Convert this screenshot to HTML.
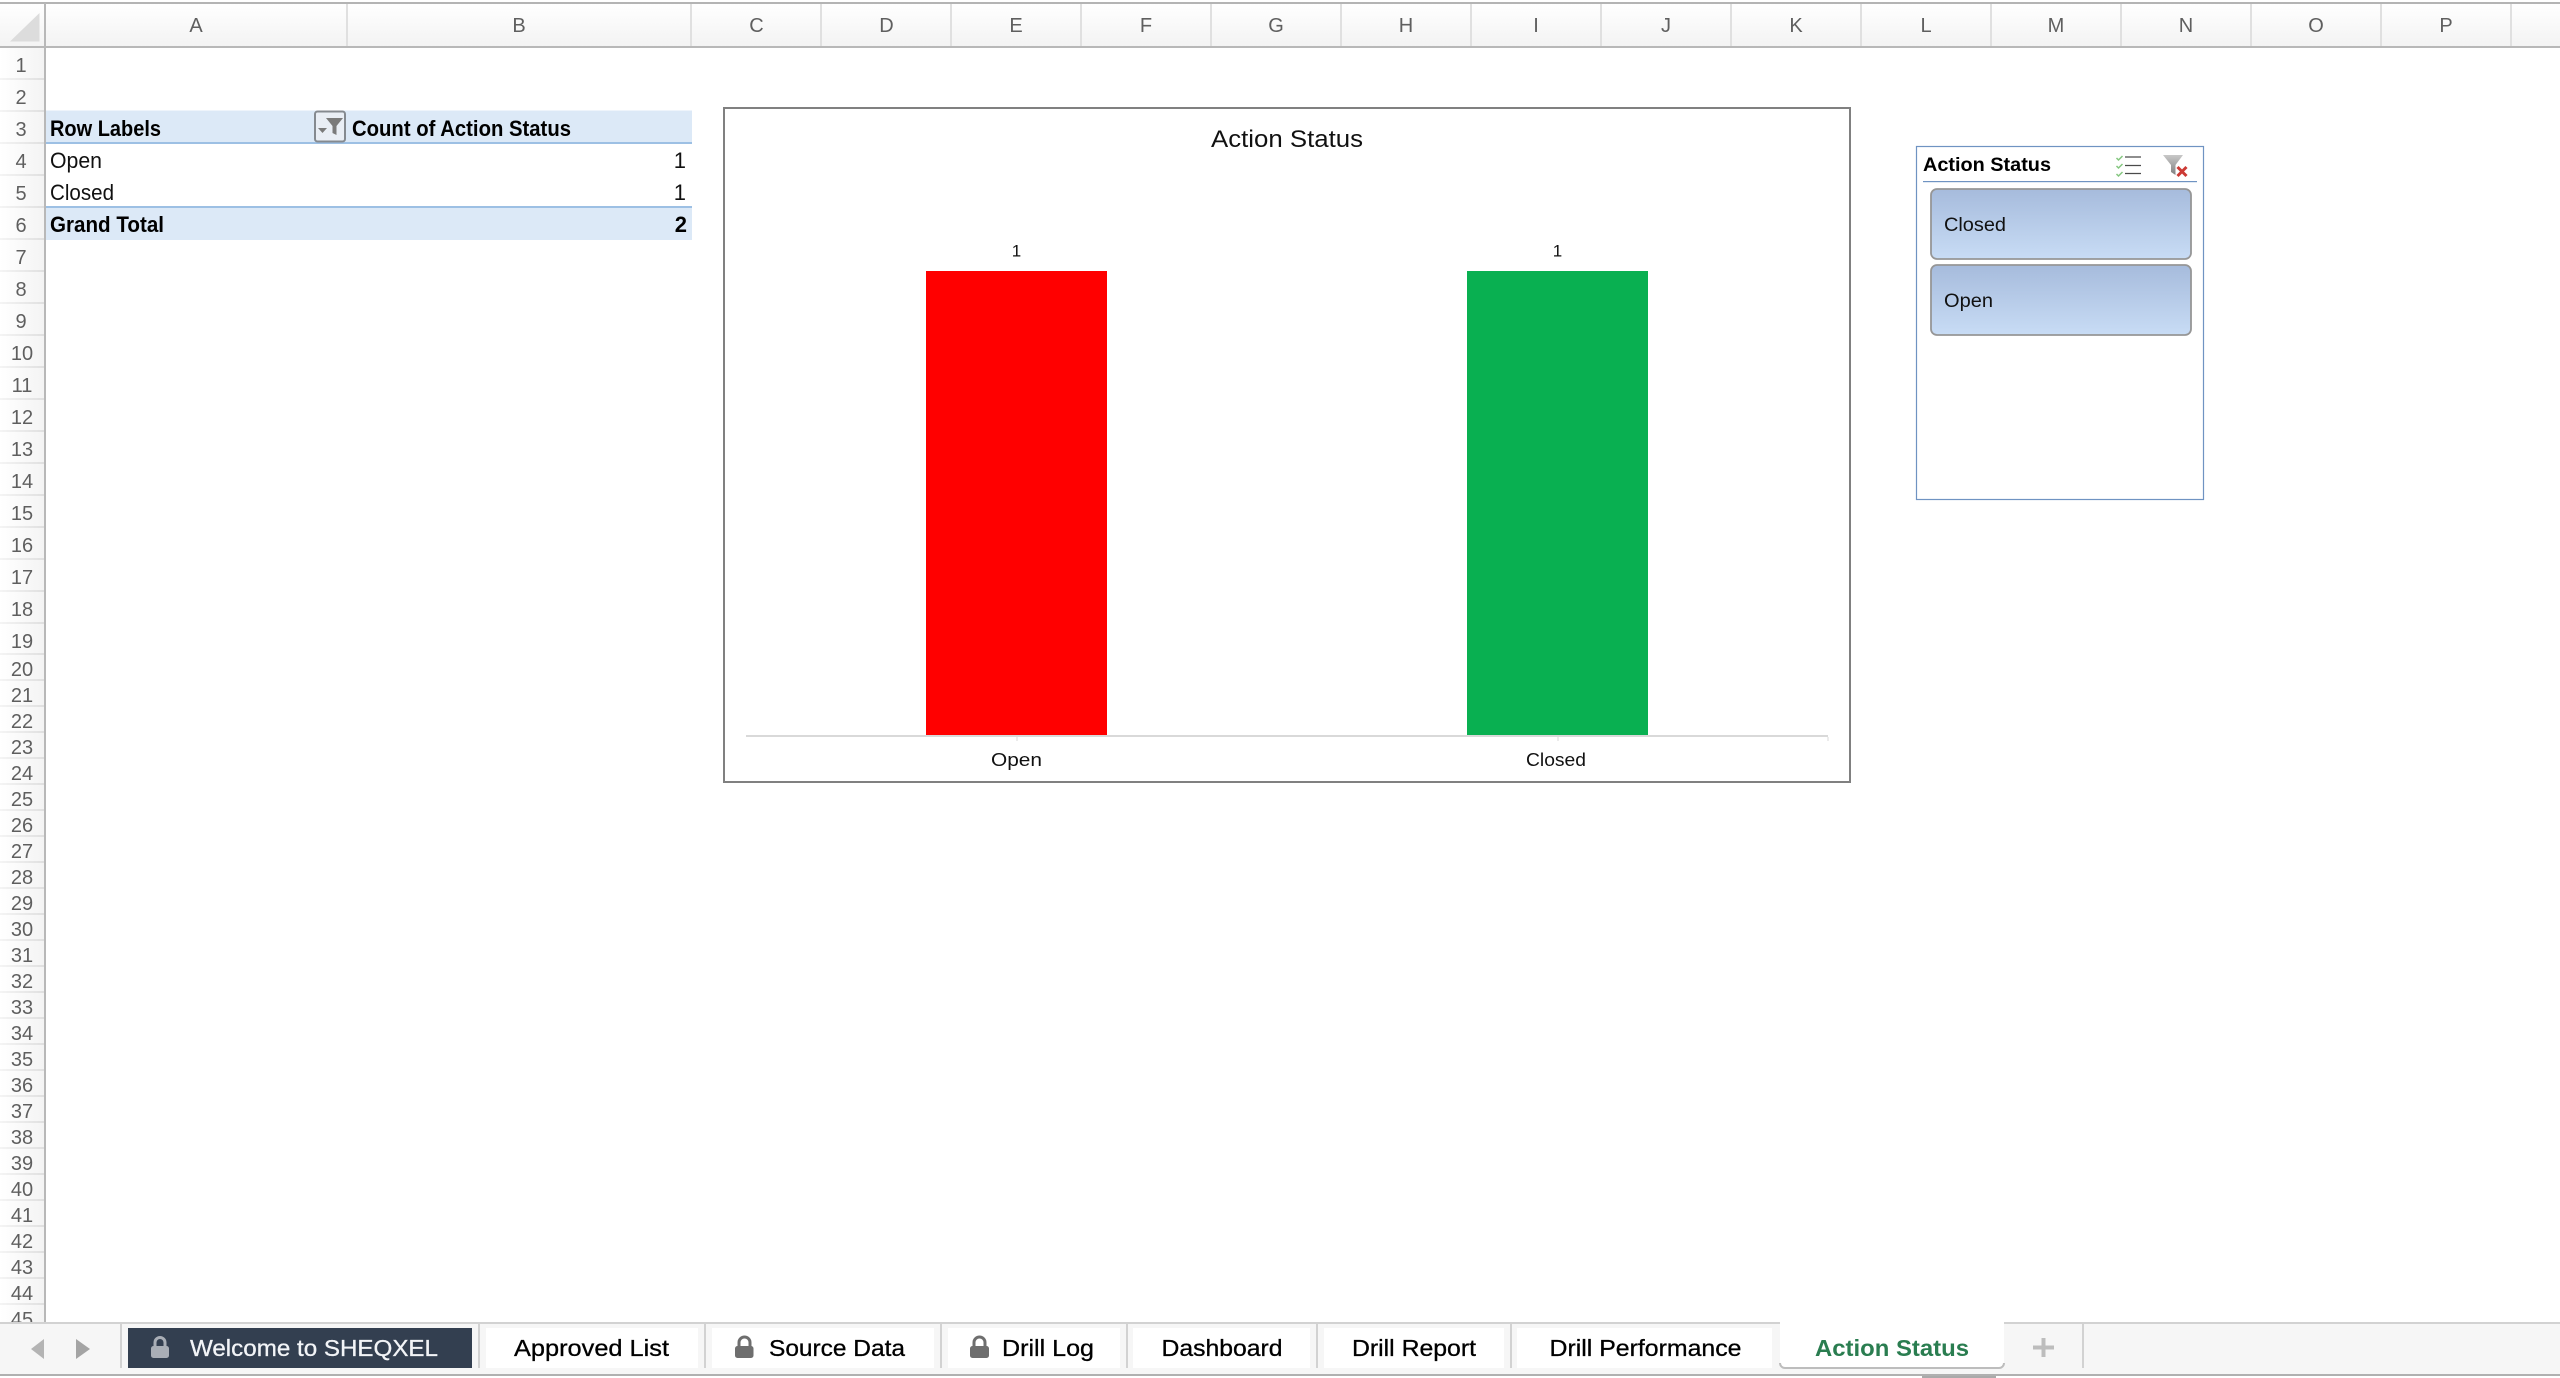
<!DOCTYPE html>
<html lang="en">
<head>
<meta charset="utf-8">
<title>Action Status</title>
<style>
html,body{margin:0;padding:0;background:#fff;width:2560px;height:1378px;overflow:hidden}
svg{display:block}
text{font-family:"Liberation Sans",Arial,sans-serif}
.h{font-size:20px;fill:#5f5f5f;text-anchor:middle}
.p{font-size:22px;fill:#111}
.b{font-size:22px;fill:#000;font-weight:bold}
.t{font-size:23px;fill:#000;stroke:#000;stroke-width:.3px}
.c{fill:#000}
</style>
</head>
<body>
<svg width="2560" height="1378" viewBox="0 0 2560 1378" xmlns="http://www.w3.org/2000/svg">
<defs>
<linearGradient id="hd" x1="0" y1="0" x2="0" y2="1"><stop offset="0" stop-color="#ffffff"/><stop offset="1" stop-color="#f3f3f3"/></linearGradient>
<linearGradient id="rh" x1="0" y1="0" x2="1" y2="0"><stop offset="0" stop-color="#ffffff"/><stop offset="1" stop-color="#f4f4f4"/></linearGradient>
<linearGradient id="rl" x1="0" y1="0" x2="1" y2="0"><stop offset="0" stop-color="#f4f4f4"/><stop offset="1" stop-color="#e0e0e0"/></linearGradient>
<linearGradient id="btn" x1="0" y1="0" x2="0" y2="1"><stop offset="0" stop-color="#a6bbdc"/><stop offset="1" stop-color="#c8dcf5"/></linearGradient>
<linearGradient id="fun" x1="0" y1="0" x2="0" y2="1"><stop offset="0" stop-color="#c8c8c8"/><stop offset="1" stop-color="#808080"/></linearGradient>
</defs>

<rect width="2560" height="1378" fill="#fff"/>

<!-- column header -->
<rect x="0" y="3" width="2560" height="44" fill="url(#hd)"/>
<rect x="0" y="2" width="2560" height="2" fill="#b4b4b4"/>
<g fill="#e0e0e0">
<rect x="346" y="4" width="2" height="42"/><rect x="690" y="4" width="2" height="42"/><rect x="820" y="4" width="2" height="42"/><rect x="950" y="4" width="2" height="42"/><rect x="1080" y="4" width="2" height="42"/><rect x="1210" y="4" width="2" height="42"/><rect x="1340" y="4" width="2" height="42"/><rect x="1470" y="4" width="2" height="42"/><rect x="1600" y="4" width="2" height="42"/><rect x="1730" y="4" width="2" height="42"/><rect x="1860" y="4" width="2" height="42"/><rect x="1990" y="4" width="2" height="42"/><rect x="2120" y="4" width="2" height="42"/><rect x="2250" y="4" width="2" height="42"/><rect x="2380" y="4" width="2" height="42"/><rect x="2510" y="4" width="2" height="42"/>
</g>
<g class="hl">
<text class="h" x="196" y="32">A</text><text class="h" x="519" y="32">B</text><text class="h" x="756.500" y="32">C</text><text class="h" x="886.500" y="32">D</text><text class="h" x="1016" y="32">E</text><text class="h" x="1146" y="32">F</text><text class="h" x="1276" y="32">G</text><text class="h" x="1406" y="32">H</text><text class="h" x="1536" y="32">I</text><text class="h" x="1666" y="32">J</text><text class="h" x="1796" y="32">K</text><text class="h" x="1926" y="32">L</text><text class="h" x="2056" y="32">M</text><text class="h" x="2186" y="32">N</text><text class="h" x="2316" y="32">O</text><text class="h" x="2446" y="32">P</text>
</g>
<polygon points="39.5,13 39.5,41.5 10,41.5" fill="#dcdcdc"/>

<!-- row header -->
<rect x="0" y="47" width="44" height="1280" fill="url(#rh)"/>
<g fill="url(#rl)">
<rect x="0" y="78" width="44" height="2"/><rect x="0" y="110" width="44" height="2"/><rect x="0" y="142" width="44" height="2"/><rect x="0" y="174" width="44" height="2"/><rect x="0" y="206" width="44" height="2"/><rect x="0" y="238" width="44" height="2"/><rect x="0" y="270" width="44" height="2"/><rect x="0" y="302" width="44" height="2"/><rect x="0" y="334" width="44" height="2"/><rect x="0" y="366" width="44" height="2"/><rect x="0" y="398" width="44" height="2"/><rect x="0" y="430" width="44" height="2"/><rect x="0" y="462" width="44" height="2"/><rect x="0" y="494" width="44" height="2"/><rect x="0" y="526" width="44" height="2"/><rect x="0" y="558" width="44" height="2"/><rect x="0" y="590" width="44" height="2"/><rect x="0" y="622" width="44" height="2"/><rect x="0" y="653" width="44" height="2"/>
<rect x="0" y="679" width="44" height="2"/><rect x="0" y="705" width="44" height="2"/><rect x="0" y="731" width="44" height="2"/><rect x="0" y="757" width="44" height="2"/><rect x="0" y="783" width="44" height="2"/><rect x="0" y="809" width="44" height="2"/><rect x="0" y="835" width="44" height="2"/><rect x="0" y="861" width="44" height="2"/><rect x="0" y="887" width="44" height="2"/><rect x="0" y="913" width="44" height="2"/><rect x="0" y="939" width="44" height="2"/><rect x="0" y="965" width="44" height="2"/><rect x="0" y="991" width="44" height="2"/><rect x="0" y="1017" width="44" height="2"/><rect x="0" y="1043" width="44" height="2"/><rect x="0" y="1069" width="44" height="2"/><rect x="0" y="1095" width="44" height="2"/><rect x="0" y="1121" width="44" height="2"/><rect x="0" y="1147" width="44" height="2"/><rect x="0" y="1173" width="44" height="2"/><rect x="0" y="1199" width="44" height="2"/><rect x="0" y="1225" width="44" height="2"/><rect x="0" y="1251" width="44" height="2"/><rect x="0" y="1277" width="44" height="2"/><rect x="0" y="1303" width="44" height="2"/>
</g>
<g>
<text class="h" x="21" y="72">1</text><text class="h" x="21" y="104">2</text><text class="h" x="21" y="136">3</text><text class="h" x="21" y="168">4</text><text class="h" x="21" y="200">5</text><text class="h" x="21" y="232">6</text><text class="h" x="21" y="264">7</text><text class="h" x="21" y="296">8</text><text class="h" x="21" y="328">9</text><text class="h" x="22" y="360">10</text><text class="h" x="22" y="392">11</text><text class="h" x="22" y="424">12</text><text class="h" x="22" y="456">13</text><text class="h" x="22" y="488">14</text><text class="h" x="22" y="520">15</text><text class="h" x="22" y="552">16</text><text class="h" x="22" y="584">17</text><text class="h" x="22" y="616">18</text><text class="h" x="22" y="648">19</text>
<text class="h" x="22" y="676">20</text><text class="h" x="22" y="702">21</text><text class="h" x="22" y="728">22</text><text class="h" x="22" y="754">23</text><text class="h" x="22" y="780">24</text><text class="h" x="22" y="806">25</text><text class="h" x="22" y="832">26</text><text class="h" x="22" y="858">27</text><text class="h" x="22" y="884">28</text><text class="h" x="22" y="910">29</text><text class="h" x="22" y="936">30</text><text class="h" x="22" y="962">31</text><text class="h" x="22" y="988">32</text><text class="h" x="22" y="1014">33</text><text class="h" x="22" y="1040">34</text><text class="h" x="22" y="1066">35</text><text class="h" x="22" y="1092">36</text><text class="h" x="22" y="1118">37</text><text class="h" x="22" y="1144">38</text><text class="h" x="22" y="1170">39</text><text class="h" x="22" y="1196">40</text><text class="h" x="22" y="1222">41</text><text class="h" x="22" y="1248">42</text><text class="h" x="22" y="1274">43</text><text class="h" x="22" y="1300">44</text><text class="h" x="22" y="1326">45</text>
</g>
<rect x="44" y="3" width="2" height="1322" fill="#b8b8b8"/>
<rect x="0" y="46" width="2560" height="2" fill="#b8b8b8"/>

<!-- pivot table -->
<rect x="46" y="110.500" width="646" height="32.500" fill="#dce9f7"/>
<rect x="46" y="142" width="646" height="2" fill="#9dc0e4"/>
<rect x="46" y="207" width="646" height="33" fill="#dce9f7"/>
<rect x="46" y="206" width="646" height="2" fill="#9dc0e4"/>
<text class="b" x="50" y="136" textLength="111" lengthAdjust="spacingAndGlyphs">Row Labels</text>
<text class="b" x="352" y="136" textLength="219" lengthAdjust="spacingAndGlyphs">Count of Action Status</text>
<text class="p" x="50" y="168" textLength="52" lengthAdjust="spacingAndGlyphs">Open</text>
<text class="p" x="50" y="200" textLength="64" lengthAdjust="spacingAndGlyphs">Closed</text>
<text class="b" x="50" y="232" textLength="114" lengthAdjust="spacingAndGlyphs">Grand Total</text>
<text class="p" x="686" y="168" text-anchor="end">1</text>
<text class="p" x="686" y="200" text-anchor="end">1</text>
<text class="b" x="687" y="232" text-anchor="end">2</text>
<rect x="315" y="111.500" width="30" height="30" rx="2.500" fill="#e9eef5" stroke="#858a90" stroke-width="2"/>
<path d="M326 118H343L336.500 126V135L332.500 133V126Z" fill="#7a7a7a"/>
<path d="M318 128H327L322.500 133Z" fill="#7a7a7a"/>

<!-- chart -->
<rect x="724" y="108" width="1126" height="674" fill="#fff" stroke="#808080" stroke-width="2"/>
<text x="1211" y="147" font-size="24" fill="#111" textLength="152" lengthAdjust="spacingAndGlyphs">Action Status</text>
<rect x="926" y="271" width="181" height="464" fill="#ff0000"/>
<rect x="1467" y="271" width="181" height="464" fill="#09b051"/>
<rect x="746" y="735" width="1082" height="2" fill="#d9d9d9"/>
<rect x="1016.500" y="737" width="1" height="4" fill="#d9d9d9"/>
<rect x="1557.500" y="737" width="1" height="4" fill="#d9d9d9"/>
<rect x="1827.500" y="737" width="1" height="4" fill="#d9d9d9"/>
<text x="1016.500" y="256.500" font-size="17" fill="#111" text-anchor="middle">1</text>
<text x="1557.500" y="256.500" font-size="17" fill="#111" text-anchor="middle">1</text>
<text x="991" y="766" font-size="18" fill="#111" textLength="51" lengthAdjust="spacingAndGlyphs">Open</text>
<text x="1526" y="766" font-size="18" fill="#111" textLength="60" lengthAdjust="spacingAndGlyphs">Closed</text>

<!-- slicer -->
<rect x="1916.500" y="146.500" width="287" height="353" fill="#fff" stroke="#6f93c2" stroke-width="1.200"/>
<text x="1923" y="171" font-size="19.500" font-weight="bold" fill="#000" textLength="128" lengthAdjust="spacingAndGlyphs">Action Status</text>
<rect x="1923" y="181" width="274" height="1.200" fill="#6f93c2"/>
<path d="M2116.500 158l2 2 4-4M2116.500 166l2 2 4-4M2116.500 174l2 2 4-4" fill="none" stroke="#84c77f" stroke-width="1.500"/>
<path d="M2125 157H2141M2125 165.500H2141M2125 173.500H2141" stroke="#4a4a4a" stroke-width="1.300" fill="none"/>
<path d="M2163 155H2183L2175.500 165V175L2171 172V165Z" fill="url(#fun)"/>
<path d="M2177.500 167L2186.500 176M2186.500 167L2177.500 176" stroke="#cc3a35" stroke-width="3" fill="none"/>
<rect x="1931" y="189" width="260" height="70" rx="6" fill="url(#btn)" stroke="#969696" stroke-width="1.800"/>
<rect x="1931" y="265" width="260" height="70" rx="6" fill="url(#btn)" stroke="#969696" stroke-width="1.800"/>
<text x="1944" y="231" font-size="19.500" fill="#111" textLength="62" lengthAdjust="spacingAndGlyphs">Closed</text>
<text x="1944" y="307" font-size="19.500" fill="#111" textLength="49" lengthAdjust="spacingAndGlyphs">Open</text>

<!-- sheet tabs -->
<rect x="0" y="1323" width="2560" height="51" fill="#f6f6f6"/>
<rect x="0" y="1322" width="2560" height="2" fill="#d2d2d2"/>
<rect x="0" y="1374" width="2560" height="2" fill="#b0b0b0"/>
<rect x="1922" y="1376" width="74" height="2" fill="#aaaaaa"/>
<polygon points="44,1339 44,1359 31,1349" fill="#b4b4b4"/>
<polygon points="76,1339 76,1359 90,1349" fill="#a4a4a4"/>
<g fill="#d2d2d2">
<rect x="120" y="1324" width="2" height="44"/><rect x="478" y="1324" width="2" height="44"/><rect x="704" y="1324" width="2" height="44"/><rect x="940" y="1324" width="2" height="44"/><rect x="1126" y="1324" width="2" height="44"/><rect x="1316" y="1324" width="2" height="44"/><rect x="1510" y="1324" width="2" height="44"/><rect x="2082" y="1324" width="2" height="44"/>
</g>
<rect x="128" y="1328" width="344" height="40" fill="#333f50"/>
<g fill="#fff">
<rect x="486" y="1328" width="212" height="40"/><rect x="712" y="1328" width="222" height="40"/><rect x="948" y="1328" width="172" height="40"/><rect x="1133" y="1328" width="177" height="40"/><rect x="1324" y="1328" width="180" height="40"/><rect x="1517" y="1328" width="255" height="40"/>
</g>
<path d="M1780 1322H2004V1362a5 5 0 0 1-5 5H1785a5 5 0 0 1-5-5Z" fill="#fff"/>
<path d="M1780 1363a5 5 0 0 0 5 5H1999a5 5 0 0 0 5-5" fill="none" stroke="#bdbdbd" stroke-width="2"/>
<path d="M155 1347v-4.500a5 5 0 0 1 10 0v4.500" fill="none" stroke="#a9aeb6" stroke-width="3"/>
<rect x="151" y="1346" width="18" height="12" rx="2.500" fill="#a9aeb6"/>
<path d="M739 1347v-4.500a5.500 5.500 0 0 1 11 0v4.500" fill="none" stroke="#6e6e6e" stroke-width="3"/>
<rect x="735" y="1346" width="18.500" height="12" rx="2.500" fill="#6e6e6e"/>
<path d="M974 1347v-4.500a5.500 5.500 0 0 1 11 0v4.500" fill="none" stroke="#6e6e6e" stroke-width="3"/>
<rect x="970" y="1346" width="19" height="12" rx="2.500" fill="#6e6e6e"/>
<text class="t" x="190" y="1356" style="fill:#f2f4f7;stroke:#f2f4f7" textLength="248" lengthAdjust="spacingAndGlyphs">Welcome to SHEQXEL</text>
<text class="t" x="514" y="1356" textLength="155" lengthAdjust="spacingAndGlyphs">Approved List</text>
<text class="t" x="769" y="1356" textLength="136" lengthAdjust="spacingAndGlyphs">Source Data</text>
<text class="t" x="1002" y="1356" textLength="92" lengthAdjust="spacingAndGlyphs">Drill Log</text>
<text class="t" x="1161.500" y="1356" textLength="121" lengthAdjust="spacingAndGlyphs">Dashboard</text>
<text class="t" x="1352" y="1356" textLength="124" lengthAdjust="spacingAndGlyphs">Drill Report</text>
<text class="t" x="1549.500" y="1356" textLength="192" lengthAdjust="spacingAndGlyphs">Drill Performance</text>
<text class="t" x="1815" y="1356" style="fill:#2a7d50;stroke:none;font-weight:bold" textLength="154" lengthAdjust="spacingAndGlyphs">Action Status</text>
<path d="M2033 1347.500H2054M2043.500 1338V1357" stroke="#bdbdbd" stroke-width="4" fill="none"/>
</svg>
</body>
</html>
